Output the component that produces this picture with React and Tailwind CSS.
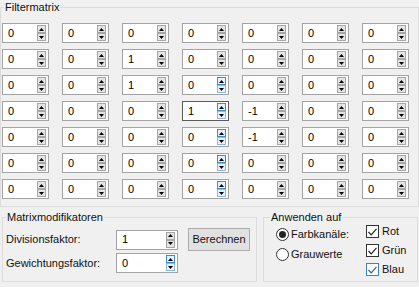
import React from "react";

const matrix = [
  ["0", "0", "0", "0", "0", "0", "0"],
  ["0", "0", "1", "0", "0", "0", "0"],
  ["0", "0", "1", "0", "0", "0", "0"],
  ["0", "0", "0", "1", "-1", "0", "0"],
  ["0", "0", "0", "0", "-1", "0", "0"],
  ["0", "0", "0", "0", "0", "0", "0"],
  ["0", "0", "0", "0", "0", "0", "0"],
];

function Half({ up, hot }) {
  return (
    <div
      className={
        hot && up
          ? "flex h-[8px] w-[9px] items-center justify-center border border-[#3c8ad8] bg-[#e5f1fb]"
          : hot
          ? "flex h-[8px] w-[9px] items-center justify-center border border-[#8fb8e0] bg-[#e5f1fb]"
          : "flex h-[8px] w-[9px] items-center justify-center border border-[#a6a6a6] bg-[#e4e4e4]"
      }
    >
      <svg width="5" height="3" viewBox="0 0 5 3">
        {up ? <path d="M0 3 L2.5 0 L5 3 Z" fill="#000" /> : <path d="M0 0 L5 0 L2.5 3 Z" fill="#000" />}
      </svg>
    </div>
  );
}

function Spin({ value, wide, hot, focus }) {
  return (
    <div
      className={`flex h-[20px] items-center bg-white pl-[5px] pr-[2px] border ${wide ? "w-[62px]" : "w-[47px]"} ${
        focus ? "border-[#5a5a5a]" : "border-[#a3a3a3]"
      }`}
    >
      <span className="flex-1 leading-none text-black">{value}</span>
      <div className="flex flex-col">
        <Half up hot={hot} />
        <Half hot={hot} />
      </div>
    </div>
  );
}

function Check({ label, blue }) {
  return (
    <div className="flex h-[19px] items-center gap-[3px]">
      <div
        className={`flex h-[13px] w-[13px] items-center justify-center border bg-white ${
          blue ? "border-[#3d83c7]" : "border-[#333333]"
        }`}
      >
        <svg width="9" height="8" viewBox="0 0 9 8">
          <path d="M0.5 4 L3.2 6.8 L8.5 0.8" fill="none" stroke={blue ? "#2a5f95" : "#222"} strokeWidth="1.2" />
        </svg>
      </div>
      <span>{label}</span>
    </div>
  );
}

function Radio({ label, on }) {
  return (
    <div className="flex h-[20px] items-center gap-[2px]">
      <div className="flex h-[13px] w-[13px] items-center justify-center rounded-full border border-[#333333] bg-white">
        {on && <div className="h-[7px] w-[7px] rounded-full bg-[#222]" />}
      </div>
      <span>{label}</span>
    </div>
  );
}

export default function App() {
  return (
    <div className="h-[287px] w-[419px] overflow-hidden bg-[#f0f0f0] text-[11px] text-[#111] font-['Liberation_Sans',Arial,sans-serif]">
      {/* Filtermatrix */}
      <fieldset className="h-[207px] w-[419px] border border-[#dcdcdc] px-0 pb-0">
        <legend className="ml-[3px] px-px leading-[14px]">Filtermatrix</legend>
        <div className="grid grid-cols-[repeat(7,47px)] gap-x-[13px] gap-y-[6px] pl-px pt-[9px]">
          {matrix.map((row, r) =>
            row.map((v, c) => (
              <Spin key={`${r}-${c}`} value={v} hot={c === 3 && r >= 2} focus={r === 3 && c === 3} />
            ))
          )}
        </div>
      </fieldset>

      <div className="ml-[2px] mt-[3px] flex gap-[6px]">
        {/* Matrixmodifikatoren */}
        <fieldset className="h-[72px] w-[255px] border border-[#dcdcdc] px-0 pb-0">
          <legend className="ml-[3px] px-px leading-[14px]">Matrixmodifikatoren</legend>
          <div className="mt-[4px] flex h-[23px] items-center pl-[3px]">
            <span className="w-[110px]">Divisionsfaktor:</span>
            <Spin value="1" wide />
            <button className="ml-[10px] h-[23px] w-[62px] border border-[#adadad] bg-[#e1e1e1] text-[11px] text-[#111]">
              Berechnen
            </button>
          </div>
          <div className="mt-[2px] flex h-[20px] items-center pl-[3px]">
            <span className="w-[110px]">Gewichtungsfaktor:</span>
            <Spin value="0" wide hot />
          </div>
        </fieldset>

        {/* Anwenden auf */}
        <fieldset className="h-[72px] w-[155px] border border-[#dcdcdc] px-0 pb-0">
          <legend className="ml-[6px] px-px leading-[14px]">Anwenden auf</legend>
          <div className="flex">
            <div className="w-[102px] pl-[12px]">
              <Radio label="Farbkanäle:" on />
              <Radio label="Grauwerte" />
            </div>
            <div className="-mt-[2px]">
              <Check label="Rot" />
              <Check label="Grün" />
              <Check label="Blau" blue />
            </div>
          </div>
        </fieldset>
      </div>
    </div>
  );
}
